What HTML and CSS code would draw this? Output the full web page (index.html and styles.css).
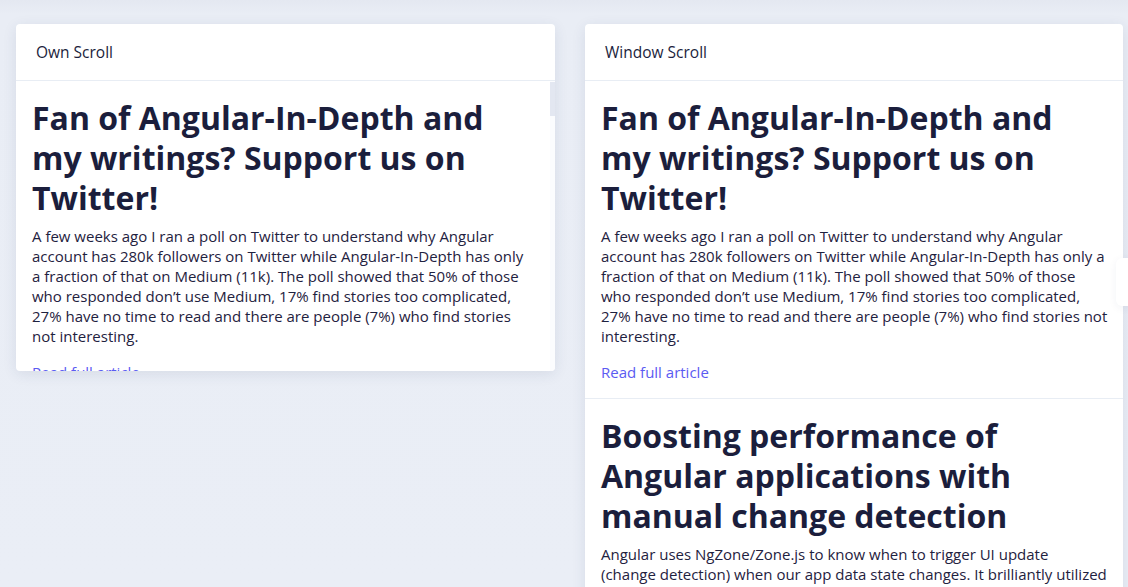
FILE: index.html
```html
<!DOCTYPE html>
<html lang="en">
<head>
<meta charset="utf-8">
<title>Scroll demo</title>
<link rel="stylesheet" href="styles.css">
</head>
<body>
<main class="page">
  <section class="card card-own">
    <header class="card-header">Own Scroll</header>
    <div class="own-body">
      <div class="own-scroll">
        <article class="item">
          <h2 class="item-title">Fan of Angular-In-Depth and my writings? Support us on Twitter!</h2>
          <p class="item-text">A few weeks ago I ran a poll on Twitter to understand why Angular account has 280k followers on Twitter while Angular-In-Depth has only a fraction of that on Medium (11k). The poll showed that 50% of those who responded don’t use Medium, 17% find stories too complicated, 27% have no time to read and there are people (7%) who find stories not interesting.</p>
          <a class="item-link" href="#">Read full article</a>
        </article>
        <article class="item">
          <h2 class="item-title">Boosting performance of Angular applications with manual change detection</h2>
          <p class="item-text">Angular uses NgZone/Zone.js to know when to trigger UI update <span class="nowrap">(change detection)</span> when our app data state changes. It brilliantly utilized a patching of async browser APIs to notify the framework that something has happened and the view may need to be refreshed.</p>
          <a class="item-link" href="#">Read full article</a>
        </article>
        <article class="item">
          <h2 class="item-title">Everything you need to know about change detection in Angular</h2>
          <p class="item-text">If you’re like me and want to have a comprehensive understanding of the change detection mechanism in Angular, you basically have to explore the sources, since there’s not much information available on the web.</p>
          <a class="item-link" href="#">Read full article</a>
        </article>
        <article class="item">
          <h2 class="item-title">Exploring Angular DOM manipulation techniques</h2>
          <p class="item-text">Whenever I read about working with DOM in Angular I always see one or few of these classes mentioned: ElementRef, TemplateRef, ViewContainerRef and others.</p>
          <a class="item-link" href="#">Read full article</a>
        </article>
        <article class="item">
          <h2 class="item-title">The mechanics of DOM updates in Angular</h2>
          <p class="item-text">DOM updates that are triggered by the model change is the key feature of all modern front-end frameworks and Angular is no exception.</p>
          <a class="item-link" href="#">Read full article</a>
        </article>
        <article class="item">
          <h2 class="item-title">Here is what you need to know about dynamic components</h2>
          <p class="item-text">If you’ve been programming with Angular for a while you’ve probably heard of dynamic components. This article explains how they work under the hood.</p>
          <a class="item-link" href="#">Read full article</a>
        </article>
      </div>
      <div class="scroll-track" aria-hidden="true"><div class="scroll-thumb"></div></div>
    </div>
  </section>

  <section class="card card-window">
    <header class="card-header">Window Scroll</header>
    <div class="window-list">
      <article class="item">
        <h2 class="item-title">Fan of Angular-In-Depth and my writings? Support us on Twitter!</h2>
        <p class="item-text">A few weeks ago I ran a poll on Twitter to understand why Angular account has 280k followers on Twitter while Angular-In-Depth has only a fraction of that on Medium (11k). The poll showed that 50% of those who responded don’t use Medium, 17% find stories too complicated, 27% have no time to read and there are people (7%) who find stories not interesting.</p>
        <a class="item-link" href="#">Read full article</a>
      </article>
      <article class="item">
        <h2 class="item-title">Boosting performance of Angular applications with manual change detection</h2>
        <p class="item-text">Angular uses NgZone/Zone.js to know when to trigger UI update <span class="nowrap">(change detection)</span> when our app data state changes. It brilliantly utilized a patching of async browser APIs to notify the framework that something has happened and the view may need to be refreshed.</p>
        <a class="item-link" href="#">Read full article</a>
      </article>
    </div>
  </section>

  <div class="side-tab"></div>
</main>
</body>
</html>
```

FILE: styles.css
```css
html, body {
  margin: 0;
  padding: 0;
  height: 100%;
  overflow: hidden;
}

body {
  background: #e9edf5;
  font-family: "Open Sans", "Noto Sans", sans-serif;
  color: #1b1e3c;
}

.page {
  position: relative;
  display: flex;
  align-items: flex-start;
  gap: 30px;
  padding: 24px 0 0 16px;
  height: 100%;
  box-sizing: border-box;
  background: linear-gradient(#e4e8f1 0, #e9edf5 14px, #eaeef6 100%);
}

.card {
  background: #ffffff;
  border-radius: 4px;
  box-shadow: 0 3px 14px rgba(40, 55, 100, 0.10);
  flex: none;
}

.card-own {
  width: 539px;
  overflow: hidden;
}

.card-window {
  width: 538px;
}

.card-header {
  height: 56px;
  display: flex;
  align-items: center;
  padding: 0 20px;
  font-size: 15.5px;
  font-weight: 500;
  color: #1b1e3c;
  border-bottom: 1px solid #e8edf4;
}

.own-body {
  display: flex;
  height: 290px;
}

.own-scroll {
  flex: 1;
  min-width: 0;
  overflow: hidden;
}

.scroll-track {
  width: 5px;
  flex: none;
  background: #fbfcfe;
}

.scroll-thumb {
  margin-top: 1px;
  height: 34px;
  background: #e3e7f1;
}

.item {
  padding: 17px 16px 16px;
  border-bottom: 1px solid #e8edf4;
}

.card-window .item {
  padding-right: 15px;
}

.item-title {
  margin: 0;
  font-size: 32px;
  line-height: 40px;
  font-weight: 700;
  color: #1b1e3c;
}

.item-text {
  margin: 8px 0 0;
  font-size: 15px;
  line-height: 20px;
  color: #1f2240;
}

.nowrap {
  white-space: nowrap;
}

.item-link {
  display: block;
  margin-top: 16px;
  font-size: 15px;
  line-height: 20px;
  color: #5b5bf2;
  text-decoration: none;
}

.side-tab {
  position: absolute;
  left: 1116px;
  top: 258px;
  width: 24px;
  height: 48px;
  background: #ffffff;
  border-radius: 6px;
  box-shadow: 0 2px 8px rgba(40, 55, 100, 0.06);
}
```
